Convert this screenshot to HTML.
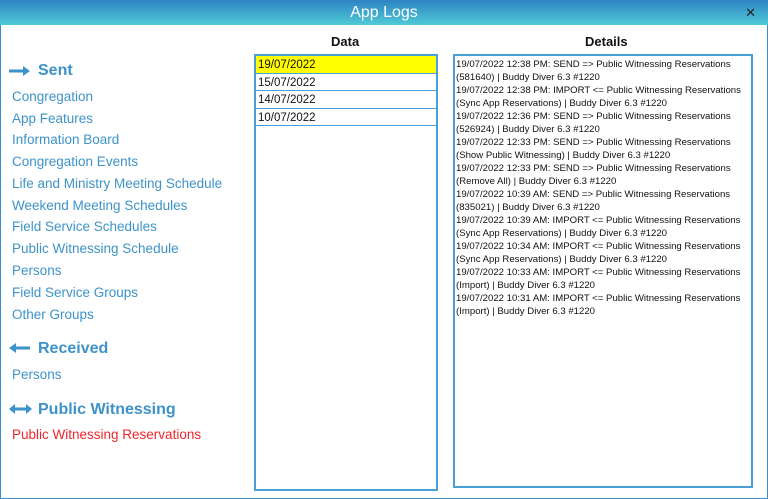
<!DOCTYPE html>
<html><head><meta charset="utf-8"><style>
*{margin:0;padding:0;box-sizing:border-box}
body{width:768px;height:499px;overflow:hidden;background:#fff;font-family:"Liberation Sans",sans-serif;position:relative}
.win{position:absolute;left:0;top:0;width:768px;height:499px;border:1px solid #3a8fd0;border-top:none}
.title{position:absolute;left:0;top:0;width:768px;height:25px;background:linear-gradient(#2f84c3,#4fcad6);color:#fff;font-size:16px;text-align:center;line-height:25px}
.x{position:absolute;right:12px;top:0;color:#222;font-size:13px;line-height:25px}
.l{position:absolute;left:12px;color:#3d93c9;font-size:13.5px}
.h{position:absolute;left:38px;color:#3d93c9;font-size:16px;font-weight:bold}
.ic{position:absolute;left:9px}
.col{position:absolute;font-weight:bold;font-size:13px;color:#111}
.box{position:absolute;border:2px solid #4a9fd6;background:#fff}
.row{height:17.5px;border-bottom:1px solid #4a9fd6;font-size:11.5px;line-height:19px;padding-left:2px;color:#111}
.det{font-size:9.6px;line-height:13px;color:#111;padding:2px 0 0 1px;white-space:nowrap}
</style></head><body>
<div class="win"></div>
<div class="title">App Logs<span class="x">✕</span></div>
<svg class="ic" style="top:65px" width="22" height="12" viewBox="0 0 22 12"><path d="M0 4.5H14V1L21 6L14 11V7.5H0Z" fill="#3d93c9"/></svg>
<div class="h" style="top:62px">Sent</div>
<div class="l" style="top:89px">Congregation</div>
<div class="l" style="top:111px">App Features</div>
<div class="l" style="top:132px">Information Board</div>
<div class="l" style="top:154px">Congregation Events</div>
<div class="l" style="top:176px">Life and Ministry Meeting Schedule</div>
<div class="l" style="top:198px">Weekend Meeting Schedules</div>
<div class="l" style="top:219px">Field Service Schedules</div>
<div class="l" style="top:241px">Public Witnessing Schedule</div>
<div class="l" style="top:263px">Persons</div>
<div class="l" style="top:285px">Field Service Groups</div>
<div class="l" style="top:307px">Other Groups</div>
<svg class="ic" style="top:342px" width="22" height="12" viewBox="0 0 22 12"><path d="M21 4.5H7V1L0 6L7 11V7.5H21Z" fill="#3d93c9"/></svg>
<div class="h" style="top:340px">Received</div>
<div class="l" style="top:367px">Persons</div>
<svg class="ic" style="top:403px" width="23" height="12" viewBox="0 0 23 12"><path d="M0 6L6 1V4.5H17V1L23 6L17 11V7.5H6V11Z" fill="#3d93c9"/></svg>
<div class="h" style="top:401px">Public Witnessing</div>
<div class="l" style="top:427px;color:#f0262c">Public Witnessing Reservations</div>
<div class="col" style="left:331px;top:34px">Data</div>
<div class="col" style="left:585px;top:34px">Details</div>
<div class="box" style="left:254px;top:54px;width:184px;height:437px">
<div class="row" style="background:#ffff00">19/07/2022</div>
<div class="row">15/07/2022</div>
<div class="row">14/07/2022</div>
<div class="row">10/07/2022</div>
</div>
<div class="box" style="left:453px;top:54px;width:300px;height:434px"><div class="det">
19/07/2022 12:38 PM: SEND =&gt; Public Witnessing Reservations<br>(581640) | Buddy Diver 6.3 #1220<br>
19/07/2022 12:38 PM: IMPORT &lt;= Public Witnessing Reservations<br>(Sync App Reservations) | Buddy Diver 6.3 #1220<br>
19/07/2022 12:36 PM: SEND =&gt; Public Witnessing Reservations<br>(526924) | Buddy Diver 6.3 #1220<br>
19/07/2022 12:33 PM: SEND =&gt; Public Witnessing Reservations<br>(Show Public Witnessing) | Buddy Diver 6.3 #1220<br>
19/07/2022 12:33 PM: SEND =&gt; Public Witnessing Reservations<br>(Remove All) | Buddy Diver 6.3 #1220<br>
19/07/2022 10:39 AM: SEND =&gt; Public Witnessing Reservations<br>(835021) | Buddy Diver 6.3 #1220<br>
19/07/2022 10:39 AM: IMPORT &lt;= Public Witnessing Reservations<br>(Sync App Reservations) | Buddy Diver 6.3 #1220<br>
19/07/2022 10:34 AM: IMPORT &lt;= Public Witnessing Reservations<br>(Sync App Reservations) | Buddy Diver 6.3 #1220<br>
19/07/2022 10:33 AM: IMPORT &lt;= Public Witnessing Reservations<br>(Import) | Buddy Diver 6.3 #1220<br>
19/07/2022 10:31 AM: IMPORT &lt;= Public Witnessing Reservations<br>(Import) | Buddy Diver 6.3 #1220
</div></div>
</body></html>
